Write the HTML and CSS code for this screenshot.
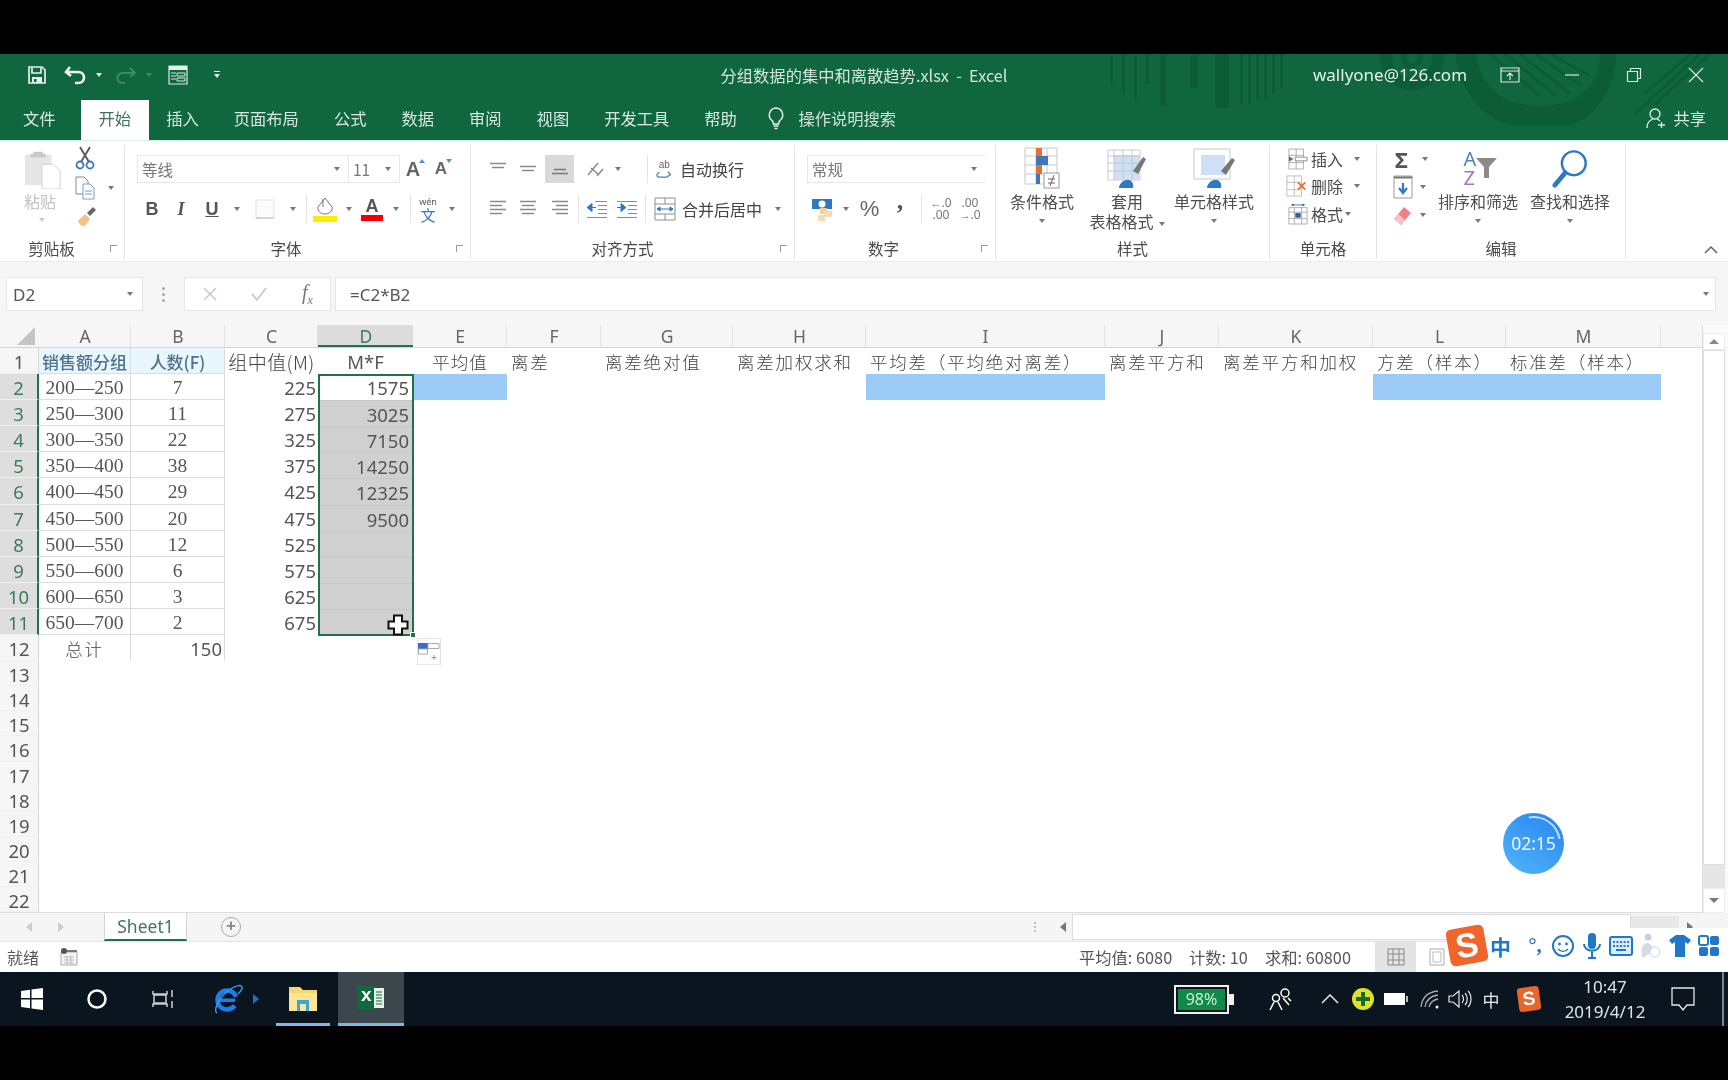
FILE: index.html
```html
<!DOCTYPE html>
<html lang="zh-CN">
<head>
<meta charset="utf-8">
<title>分组数据的集中和离散趋势.xlsx - Excel</title>
<link rel="stylesheet" href="styles.css">
</head>
<body>
<div class="page">
  <div class="black-top"></div>
  <main class="app">
    <header class="chrome">
      <svg class="decor" width="1728" height="86" viewBox="0 0 1728 86">
        <g fill="#0c5c37">
          <rect x="1110" y="0" width="3" height="30"/><rect x="1122" y="0" width="3" height="40"/><rect x="1134" y="0" width="3" height="46"/><rect x="1146" y="0" width="3" height="30"/>
          <rect x="1160" y="0" width="6" height="52"/><rect x="1190" y="0" width="8" height="34"/><rect x="1215" y="0" width="14" height="54"/><rect x="1240" y="0" width="3" height="50"/><rect x="1248" y="0" width="3" height="50"/><rect x="1256" y="0" width="3" height="46"/><rect x="1264" y="0" width="3" height="46"/><rect x="1272" y="0" width="3" height="40"/><rect x="1280" y="0" width="3" height="34"/>
        </g>
        <circle cx="1412" cy="4" r="26" fill="none" stroke="#0c5c37" stroke-width="12"/>
        <circle cx="1412" cy="4" r="8" fill="none" stroke="#0c5c37" stroke-width="5"/>
        <path d="M1456 0 C1458 40 1490 70 1515 72 L1570 72 C1600 60 1616 30 1616 0 L1600 0 C1600 30 1580 52 1540 52 C1500 52 1480 30 1476 0 Z" fill="#0c5c37"/>
        <g stroke="#0c5c37" stroke-width="3"><path d="M1490 0 L1540 42M1505 0 L1556 42M1520 0 L1570 40M1535 0 L1582 32M1550 0 L1590 22"/><path d="M1645 40 L1690 0M1655 50 L1710 0M1635 60 L1700 0"/></g>
      </svg>
      <div class="titlebar">
        <div class="qat">
          <svg class="ico" width="20" height="20" viewBox="0 0 20 20"><path d="M2 2h13l3 3v13H2zM5 3v5h9V3" fill="none" stroke="#e6f0ea" stroke-width="1.7"/><path d="M5 12h10v6H5z" fill="#e6f0ea"/><rect x="7" y="14" width="2.5" height="3" fill="#10673f"/></svg>
          <svg class="ico end" width="26" height="22" viewBox="0 0 26 22"><path d="M6 3 2 8l5 4M3 8h11c8 0 8 11 0 11h-3" fill="none" stroke="#f0f5f2" stroke-width="2.6"/></svg>
          <i class="caret light"></i>
          <svg class="ico" width="24" height="20" viewBox="0 0 24 20"><path d="M17 3l5 5-5 4M21 8H10c-8 0-7 10 0 10h2" fill="none" stroke="#3f8a64" stroke-width="2"/></svg>
          <i class="caret dim"></i>
          <svg class="ico" width="20" height="20" viewBox="0 0 20 20"><path d="M1 1h18v18H1z" fill="none" stroke="#dbe8e0" stroke-width="1.2"/><path d="M1 1h18v4H1z" fill="#e6f0ea"/><path d="M3 8h5M3 11h5M3 14h5M9 8h8v3H9zM9 13h8v3H9z" fill="none" stroke="#dbe8e0"/></svg>
          <span class="qat-more"><i class="qat-line"></i><i class="caret light"></i></span>
        </div>
        <h1 class="doc-title">分组数据的集中和离散趋势.xlsx&nbsp; - &nbsp;Excel</h1>
        <div class="win-controls">
          <span class="user">wallyone@126.com</span>
          <svg class="wc" width="20" height="16" viewBox="0 0 20 16"><path d="M1 1h18v14H1zM1 4h18M10 13V7M7 9l3-3 3 3" fill="none" stroke="#d8e8df" stroke-width="1.2"/></svg>
          <svg class="wc" width="16" height="16" viewBox="0 0 16 16"><path d="M1 8h14" stroke="#d8e8df" stroke-width="1.2"/></svg>
          <svg class="wc" width="16" height="16" viewBox="0 0 16 16"><path d="M1.5 4.500h10v10h-10zM4.500 4.500v-3h10v10h-3" fill="none" stroke="#d8e8df" stroke-width="1.2"/></svg>
          <svg class="wc" width="16" height="16" viewBox="0 0 16 16"><path d="M1 1l14 14M15 1L1 15" stroke="#d8e8df" stroke-width="1.2"/></svg>
        </div>
      </div>
      <nav class="tabs">
        <span class="tab">文件</span>
        <span class="tab active">开始</span>
        <span class="tab">插入</span>
        <span class="tab">页面布局</span>
        <span class="tab">公式</span>
        <span class="tab">数据</span>
        <span class="tab">审阅</span>
        <span class="tab">视图</span>
        <span class="tab">开发工具</span>
        <span class="tab">帮助</span>
        <svg class="bulb" width="18" height="24" viewBox="0 0 18 24"><path d="M9 2a7 7 0 0 0-4 12.500c1 1 1.500 2 1.500 3.500h5c0-1.500.5-2.500 1.500-3.500A7 7 0 0 0 9 2z" fill="none" stroke="#e3efe8" stroke-width="1.500"/><path d="M6.500 20h5M7.500 22.500h3" stroke="#e3efe8" stroke-width="1.600"/></svg>
        <span class="search">操作说明搜索</span>
        <span class="share">
          <svg width="20" height="22" viewBox="0 0 20 22"><circle cx="9" cy="7" r="5" fill="none" stroke="#dcebe2" stroke-width="1.300"/><path d="M1 21c0-5 3-8 6-9M11 12c1 .3 2 1 3 2M12 18h7M15.500 15v6" fill="none" stroke="#dcebe2" stroke-width="1.300"/></svg>
          共享
        </span>
      </nav>
    </header>

    <section class="ribbon">
      <div class="group g-clip">
        <div class="clip-body">
          <div class="paste">
            <svg width="38" height="40" viewBox="0 0 38 42"><path d="M0 6h28v32H0z" fill="#e6e6e6"/><path d="M9 3h10v2h3v4H6V5h3z" fill="#c9c9c9"/><path d="M18 16h12l7 7v19H18z" fill="#fff" stroke="#cfcfcf"/></svg>
            <span class="paste-label">粘贴</span>
            <i class="caret pale"></i>
          </div>
          <div class="clip-tools">
            <svg width="20" height="24" viewBox="0 0 20 24"><path d="M5 1l9 15M15 1L6 16" stroke="#555" stroke-width="1.800" fill="none"/><circle cx="5" cy="19" r="3.500" fill="none" stroke="#3f78b5" stroke-width="1.800"/><circle cx="15" cy="19" r="3.500" fill="none" stroke="#3f78b5" stroke-width="1.800"/></svg>
            <span class="copy">
              <svg width="22" height="24" viewBox="0 0 22 24"><path d="M1 1h8l4 4v13H1z" fill="#fff" stroke="#888"/><path d="M8 8h7l4 4v11H8z" fill="#fff" stroke="#7a9ec4"/><path d="M10 15h7M10 18h7" stroke="#7a9ec4"/></svg>
              <i class="caret"></i>
            </span>
            <svg width="22" height="22" viewBox="0 0 22 22"><path d="M3 15l7-7 5 5-5 7c-3 1-6-2-7-5z" fill="#f4c27f"/><path d="M12 7l6-6 3 3-6 6z" fill="#666"/></svg>
          </div>
        </div>
        <div class="glabel short"><span></span><b>剪贴板</b><i class="launcher"></i></div>
      </div>

      <div class="group g-font">
        <div class="rows">
          <div class="font-row1">
            <div class="combo font-name"><span>等线</span><i class="caret"></i></div>
            <div class="combo font-size"><span>11</span><i class="caret"></i></div>
            <span class="grow-a">A<sup class="up"></sup></span>
            <span class="shrink-a">A<sup class="down"></sup></span>
          </div>
          <div class="font-row2">
            <b class="fmt">B</b><em class="fmt it">I</em><u class="fmt">U</u><i class="caret"></i>
            <svg width="20" height="20" viewBox="0 0 20 20"><path d="M1 1h18v18H1z" fill="#fbfbfb" stroke="#e4e4e4"/><path d="M1 19h18" stroke="#bbb"/></svg>
            <i class="caret"></i><i class="vsep"></i>
            <svg width="24" height="26" viewBox="0 0 24 26"><path d="M12 2l7 9c1 4-3 7-7 7s-8-3-7-7z" fill="#fff" stroke="#777"/><path d="M10 3v8" stroke="#777"/><path d="M0 20h24v6H0z" fill="#ffec00"/></svg>
            <i class="caret"></i>
            <span class="font-color"><span>A</span><i></i></span>
            <i class="caret"></i><i class="vsep"></i>
            <span class="phon"><small>wén</small><span>文</span></span>
            <i class="caret"></i>
          </div>
        </div>
        <div class="glabel"><span></span><b>字体</b><i class="launcher"></i></div>
      </div>

      <div class="group g-align">
        <div class="rows">
          <div class="align-row1">
            <svg class="al" width="18" height="14" viewBox="0 0 18 14"><path d="M1 1.500h16M3 5.500h12" stroke="#8a8a8a" stroke-width="1.300"/></svg>
            <svg class="al" width="18" height="14" viewBox="0 0 18 14"><path d="M1 4.500h16M3 8.500h12" stroke="#8a8a8a" stroke-width="1.300"/></svg>
            <span class="al-on"><svg width="18" height="14" viewBox="0 0 18 14"><path d="M3 7.500h12M1 11.500h16" stroke="#7a7a7a" stroke-width="1.300"/></svg></span>
            <i></i>
            <svg width="22" height="18" viewBox="0 0 22 18"><path d="M2 15L12 3M5 8l7 6M17 9L11 16" stroke="#888" stroke-width="1.400" fill="none"/></svg>
            <i class="caret"></i>
            <i></i>
            <i class="vsep"></i>
            <svg class="wrap-ico" width="20" height="22" viewBox="0 0 22 22"><path d="M4 15c-4 0-4 5 0 5M4 15" fill="none" stroke="#4a7fb5" stroke-width="1.300"/><path d="M4 20h8l4-3M13 14l3 3-3 2" fill="none" stroke="#4a7fb5" stroke-width="1.300"/><text x="3" y="10" font-size="11" fill="#666" font-family="Liberation Sans">ab</text></svg>
            <span class="txt">自动换行</span>
          </div>
          <div class="align-row2">
            <svg width="18" height="20" viewBox="0 0 18 20"><path d="M1 2.500h16M1 6.500h12M1 10.500h16M1 14.500h12" stroke="#8a8a8a" stroke-width="1.300"/></svg>
            <svg width="18" height="20" viewBox="0 0 18 20"><path d="M1 2.500h16M3 6.500h12M1 10.500h16M3 14.500h12" stroke="#8a8a8a" stroke-width="1.300"/></svg>
            <svg width="18" height="20" viewBox="0 0 18 20"><path d="M1 2.500h16M5 6.500h12M1 10.500h16M5 14.500h12" stroke="#8a8a8a" stroke-width="1.300"/></svg>
            <i class="vsep"></i>
            <svg width="22" height="20" viewBox="0 0 22 20"><path d="M9 2.500h12M12 6.500h9M12 10.500h9M12 14.500h9M1 18.500h20" stroke="#8a8a8a" stroke-width="1.200"/><path d="M1 8.500l5-4v8zM5 8.500h5" fill="#2f78c4" stroke="#2f78c4"/></svg>
            <svg width="22" height="20" viewBox="0 0 22 20"><path d="M1 2.500h20M12 6.500h9M12 10.500h9M12 14.500h9M1 18.500h20" stroke="#8a8a8a" stroke-width="1.200"/><path d="M10 8.500l-5-4v8zM6 8.500H1" fill="#2f78c4" stroke="#2f78c4"/></svg>
            <i class="vsep"></i>
            <svg width="22" height="24" viewBox="0 0 22 24"><path d="M1 1h20v22H1zM1 7h20M1 17h20M11 1v6M11 17v6" fill="#fff" stroke="#8f8f8f"/><path d="M3 12h16M3 12l3-2v4zM19 12l-3-2v4z" stroke="#2f78c4" fill="#2f78c4"/></svg>
            <span class="txt">合并后居中</span>
            <i class="caret"></i>
          </div>
        </div>
        <div class="glabel"><span></span><b>对齐方式</b><i class="launcher"></i></div>
      </div>

      <div class="group g-num">
        <div class="rows">
          <div class="combo num-format"><span>常规</span><i class="caret"></i></div>
          <div class="num-row2">
            <svg width="22" height="24" viewBox="0 0 22 24"><path d="M0 2h20v10H0z" fill="#2f78c4"/><circle cx="10" cy="7" r="3.500" fill="#fff"/><path d="M8 11h7v6H8z" fill="#f4cf9c"/><path d="M12 14h8v6h-8zM6 18h7v6H6z" fill="#f6dcb6"/></svg>
            <i class="caret"></i>
            <span class="pct">%</span>
            <b class="comma">,</b>
            <i class="vsep"></i>
            <span class="dec"><span><em>←</em>.0</span><span>.00</span></span>
            <span class="dec"><span>.00</span><span><em>→</em>.0</span></span>
          </div>
        </div>
        <div class="glabel"><span></span><b>数字</b><i class="launcher"></i></div>
      </div>

      <div class="group g-styles">
        <div class="bigs">
          <div class="big b-cond">
            <svg width="36" height="42" viewBox="0 0 36 42"><path d="M1 1h32v36H1zM1 9h32M1 18h32M1 27h32M12 1v36M23 1v36" fill="#fff" stroke="#c9c9c9"/><path d="M12 1h6v8h-6zM12 18h6v9h-6z" fill="#e2703a"/><path d="M12 9h12v9H12zM12 27h4v10h-4z" fill="#3f78b5"/><path d="M20 26h15v15H20z" fill="#fff" stroke="#999"/><path d="M24 32h7M24 36h7M30 28l-4 11" stroke="#666"/></svg>
            <span>条件格式</span><i class="caret"></i>
          </div>
          <div class="big b-table">
            <svg width="40" height="42" viewBox="0 0 40 42"><path d="M1 3h32v30H1z" fill="#fff" stroke="#c9c9c9"/><path d="M7 8h26v25H7z" fill="#d0dff2"/><path d="M1 9h32M1 16h32M1 24h32M7 3v30M16 3v30M25 3v30" stroke="#bcc9da" fill="none"/><path d="M26 24l10-14 3 2-8 15z" fill="#777"/><path d="M12 41c0-4 5-9 10-8 3 .5 5 4 4 8z" fill="#2f78c4"/></svg>
            <span>套用</span><span class="line2">表格格式<i class="caret inline"></i></span>
          </div>
          <div class="big b-cell">
            <svg width="42" height="42" viewBox="0 0 42 42"><path d="M1 2h36v30H1z" fill="#fff" stroke="#c9c9c9"/><path d="M8 8h24v20H8z" fill="#cfe0f6"/><path d="M28 24l11-13 3 2-9 15z" fill="#777"/><path d="M14 41c0-4 5-9 10-8 3 .5 5 4 4 8z" fill="#2f78c4"/></svg>
            <span>单元格样式</span><i class="caret"></i>
          </div>
        </div>
        <div class="glabel center"><b>样式</b></div>
      </div>

      <div class="group g-cells">
        <div class="cell-rows">
          <div class="cell-row">
            <svg width="20" height="22" viewBox="0 0 22 24"><path d="M1 1h16v22H1zM1 8h16M1 16h16M9 1v22" fill="#fff" stroke="#aaa"/><path d="M1 9l5 3-5 3z" fill="#2f78c4"/><path d="M8 10h13v4H8z" fill="#fff" stroke="#888"/></svg>
            <span>插入</span><i class="caret"></i>
          </div>
          <div class="cell-row">
            <svg width="22" height="22" viewBox="0 0 24 24"><path d="M1 1h16v22H1zM1 8h16M1 16h16M9 1v22" fill="#fff" stroke="#bbb"/><path d="M13 8l8 8M21 8l-8 8" stroke="#e2703a" stroke-width="2"/></svg>
            <span>删除</span><i class="caret"></i>
          </div>
          <div class="cell-row">
            <svg width="20" height="22" viewBox="0 0 22 24"><path d="M1 5h20v18H1zM1 10h20M1 17h20M7 5v18M15 5v18" fill="#fff" stroke="#aaa"/><path d="M8 11h6v5H8z" fill="#2f5f9c"/><path d="M4 2h14M4 2l2-1v2zM18 2l-2-1v2z" stroke="#2f78c4"/></svg>
            <span>格式</span><i class="caret near"></i>
          </div>
        </div>
        <div class="glabel center"><b>单元格</b></div>
      </div>

      <div class="group g-edit">
        <div class="edit-body">
          <div class="edit-small">
            <div class="es es-sum"><span class="sigma">Σ</span><i class="caret"></i></div>
            <div class="es">
              <svg width="20" height="24" viewBox="0 0 20 24"><path d="M1 1h18v22H1z" fill="#fff" stroke="#9a9a9a"/><path d="M1 2.500h18" stroke="#777" stroke-width="2"/><path d="M10 8v9M6 13l4 5 4-5" fill="none" stroke="#2f78c4" stroke-width="2.200"/></svg>
              <i class="caret"></i>
            </div>
            <div class="es">
              <svg width="20" height="22" viewBox="0 0 20 22"><path d="M1 15L11 3l7 6-10 12z" fill="#f0808a"/><path d="M1 15l4-5 7 6-4 5z" fill="#f8c2c6"/></svg>
              <i class="caret"></i>
            </div>
          </div>
          <div class="big b-sort">
            <div class="sort-ico"><span class="az"><span class="a">A</span><span class="z">Z</span></span><svg width="22" height="22" viewBox="0 0 22 22"><path d="M0 1h21l-8 9v11H8V10z" fill="#8a8a8a"/></svg></div>
            <span>排序和筛选</span><i class="caret"></i>
          </div>
          <div class="big b-find">
            <svg width="40" height="40" viewBox="0 0 40 42"><circle cx="24" cy="15" r="12.500" fill="#fff" stroke="#2f78c4" stroke-width="2.600"/><path d="M15 25L4 38" stroke="#2f78c4" stroke-width="5" stroke-linecap="round"/></svg>
            <span>查找和选择</span><i class="caret"></i>
          </div>
        </div>
        <div class="glabel center"><b>编辑</b></div>
      </div>

      <div class="ribbon-end">
        <svg width="14" height="9" viewBox="0 0 14 9"><path d="M1 8l6-6 6 6" fill="none" stroke="#666" stroke-width="1.500"/></svg>
      </div>
    </section>

    <section class="formula">
      <div class="namebox"><span>D2</span><i class="caret"></i></div>
      <div class="grip"><i></i><i></i><i></i></div>
      <div class="fx-btns">
        <svg width="16" height="16" viewBox="0 0 16 16"><path d="M2 2l12 12M14 2L2 14" stroke="#c4c4c4" stroke-width="1.400"/></svg>
        <svg width="18" height="16" viewBox="0 0 18 16"><path d="M2 8l5 6 9-12" fill="none" stroke="#c4c4c4" stroke-width="1.600"/></svg>
        <span class="fx">f<sub>x</sub></span>
      </div>
      <div class="fx-input"><span>=C2*B2</span><i class="caret big-caret"></i></div>
    </section>

    <section class="sheet-wrap">
      <div class="sheet">
        <div class="row head">
          <div class="corner"><svg width="18" height="18" viewBox="0 0 18 18"><path d="M18 0v18H0z" fill="#c4c4c4"/></svg></div>
          <div class="ch">A</div><div class="ch">B</div><div class="ch">C</div><div class="ch on">D</div><div class="ch">E</div><div class="ch">F</div><div class="ch">G</div><div class="ch">H</div><div class="ch">I</div><div class="ch">J</div><div class="ch">K</div><div class="ch">L</div><div class="ch">M</div><div class="ch end-ch"></div>
        </div>
        <div class="row">
          <div class="rh">1</div>
          <div class="c b hd1 song">销售额分组</div><div class="c b hd1 song">人数(F)</div><div class="c cjk ctr tight">组中值(M)</div><div class="c ctr num">M*F</div><div class="c cjk ctr wide">平均值</div><div class="c cjk pad">离差</div><div class="c cjk pad">离差绝对值</div><div class="c cjk pad">离差加权求和</div><div class="c cjk pad">平均差（平均绝对离差）</div><div class="c cjk pad">离差平方和</div><div class="c cjk pad">离差平方和加权</div><div class="c cjk pad">方差（样本）</div><div class="c cjk pad">标准差（样本）</div>
        </div>
        <div class="row">
          <div class="rh on">2</div>
          <div class="c b song ctr">200—250</div><div class="c b song ctr">7</div><div class="c num">225</div><div class="c num">1575</div><div class="c blue"></div><div class="c"></div><div class="c"></div><div class="c"></div><div class="c blue"></div><div class="c"></div><div class="c"></div><div class="c blue"></div><div class="c blue"></div>
        </div>
        <div class="row"><div class="rh on">3</div><div class="c b song ctr">250—300</div><div class="c b song ctr">11</div><div class="c num">275</div><div class="c num sel">3025</div></div>
        <div class="row"><div class="rh on">4</div><div class="c b song ctr">300—350</div><div class="c b song ctr">22</div><div class="c num">325</div><div class="c num sel">7150</div></div>
        <div class="row"><div class="rh on">5</div><div class="c b song ctr">350—400</div><div class="c b song ctr">38</div><div class="c num">375</div><div class="c num sel">14250</div></div>
        <div class="row"><div class="rh on">6</div><div class="c b song ctr">400—450</div><div class="c b song ctr">29</div><div class="c num">425</div><div class="c num sel">12325</div></div>
        <div class="row"><div class="rh on">7</div><div class="c b song ctr">450—500</div><div class="c b song ctr">20</div><div class="c num">475</div><div class="c num sel">9500</div></div>
        <div class="row"><div class="rh on">8</div><div class="c b song ctr">500—550</div><div class="c b song ctr">12</div><div class="c num">525</div><div class="c num sel"></div></div>
        <div class="row"><div class="rh on">9</div><div class="c b song ctr">550—600</div><div class="c b song ctr">6</div><div class="c num">575</div><div class="c num sel"></div></div>
        <div class="row"><div class="rh on">10</div><div class="c b song ctr">600—650</div><div class="c b song ctr">3</div><div class="c num">625</div><div class="c num sel"></div></div>
        <div class="row"><div class="rh on">11</div><div class="c b song ctr">650—700</div><div class="c b song ctr">2</div><div class="c num">675</div><div class="c num sel"></div></div>
        <div class="row"><div class="rh">12</div><div class="c bl cjk ctr">总计</div><div class="c bl num">150</div></div>
        <div class="row low"><div class="rh">13</div></div>
        <div class="row low"><div class="rh">14</div></div>
        <div class="row low"><div class="rh">15</div></div>
        <div class="row low"><div class="rh">16</div></div>
        <div class="row low"><div class="rh">17</div></div>
        <div class="row low"><div class="rh">18</div></div>
        <div class="row low"><div class="rh">19</div></div>
        <div class="row low"><div class="rh">20</div></div>
        <div class="row low"><div class="rh">21</div></div>
        <div class="row low"><div class="rh">22</div></div>
        <div class="selection"><i class="handle"></i></div>
        <svg class="cross" width="22" height="22" viewBox="0 0 22 22"><path d="M7 1.500h8v6h5.500v7H15v6H7v-6H1.500v-7H7z" fill="#fff" stroke="#111" stroke-width="2"/></svg>
        <div class="paste-opt"><svg width="22" height="18" viewBox="0 0 22 18"><path d="M0 0h10v6H0z" fill="#3a6fc4"/><path d="M10 .5h11v5H10zM.5 6h9v5h-9z" fill="#fff" stroke="#aaa"/><path d="M16 12v5M13.500 14.500h5" stroke="#999"/></svg></div>
      </div>
      <aside class="vscroll">
        <div class="vbtn"><i class="tri up-tri"></i></div>
        <div class="vthumb"></div>
        <div class="vtrack"></div>
        <div class="vbtn low-btn"><i class="tri down-tri"></i></div>
      </aside>
    </section>

    <section class="tabbar">
      <div class="nav-arrows"><i class="tri left-tri pale-tri"></i><i class="tri right-tri pale-tri"></i></div>
      <div class="sheet-tab">Sheet1</div>
      <div class="add-sheet">+</div>
      <div class="tab-grip"><i></i><i></i><i></i></div>
      <i class="tri left-tri"></i>
      <div class="hthumb"></div>
      <div class="htrack"></div>
      <i class="tri right-tri"></i>
    </section>

    <footer class="status">
      <span class="ready">就绪</span>
      <svg width="18" height="18" viewBox="0 0 18 18"><path d="M1 4h16v13H1z" fill="#f4f4f4" stroke="#aaa"/><circle cx="4" cy="3" r="3" fill="#555"/><path d="M6 3h11" stroke="#555" stroke-width="1.500"/><path d="M4 9h10M4 12h10M4 15h10M7 8v8M11 8v8" stroke="#bbb"/></svg>
      <div class="stats"><span>平均值: 6080</span><span>计数: 10</span><span>求和: 60800</span></div>
      <div class="view on-view"><svg width="18" height="18" viewBox="0 0 18 18"><path d="M1 1h16v16H1zM1 6h16M1 12h16M6 1v16M12 1v16" fill="none" stroke="#8a8a8a"/></svg></div>
      <div class="view"><svg width="16" height="18" viewBox="0 0 16 18"><path d="M1 1h14v16H1z" fill="none" stroke="#aaa"/><path d="M4 4h8v10H4z" fill="none" stroke="#bbb"/></svg></div>
    </footer>
  </main>

  <div class="taskbar">
    <div class="task-left">
      <div class="t win"><svg width="22" height="22" viewBox="0 0 22 22"><path d="M0 3l9-1.300V10H0zM10.500 1.500L22 0v10H10.500zM0 11.500h9v8.800L0 19zM10.500 11.500H22V22l-11.500-1.600z" fill="#fff"/></svg></div>
      <div class="t cortana"><svg width="22" height="22" viewBox="0 0 22 22"><circle cx="11" cy="11" r="8.500" fill="none" stroke="#fff" stroke-width="2.500"/></svg></div>
      <div class="t tview"><svg width="24" height="24" viewBox="0 0 24 24"><path d="M3 4v3h14V4M3 20v-3h14v3M4 8h12v8H4zM22 3v7M22 14v7" fill="none" stroke="#c9ced2" stroke-width="1.500"/></svg></div>
      <div class="t ie">
        <svg class="ie-logo" width="30" height="32" viewBox="0 0 30 32"><circle cx="14" cy="17" r="9.500" fill="none" stroke="#1d7fe6" stroke-width="4.500" stroke-dasharray="50 10" stroke-dashoffset="-6"/><rect x="7" y="15.500" width="15" height="3.500" fill="#1d7fe6"/><path d="M4 30C0 28 6 14 16 7c6-4 12-6 13-3 .8 2-2 5-4 7" fill="none" stroke="#3b95ee" stroke-width="1.500"/></svg>
        <i class="tri right-tri blue-tri"></i>
      </div>
      <div class="t folder run"><svg width="30" height="28" viewBox="0 0 30 28"><path d="M1 3h11l3 3h14v21H1z" fill="#f5d76e"/><path d="M1 9h28v18H1z" fill="#fbe596"/><path d="M9 16h12v11h-3v-7h-6v7H9z" fill="#3aa7d8"/></svg></div>
      <div class="t excel run act"><svg width="28" height="26" viewBox="0 0 28 26"><path d="M0 1h19v24H0z" fill="#0f6a3e"/><path d="M17 3h10v20H17z" fill="#e6f2ea"/><path d="M19 7h6M19 10h6M19 13h6M19 16h6M19 19h6" stroke="#0f6a3e"/></svg><span class="x">x</span></div>
    </div>
    <div class="task-right">
      <div class="batt"><span>98%</span></div>
      <svg class="tr w64" width="26" height="24" viewBox="0 0 26 24"><circle cx="17" cy="6" r="4" fill="none" stroke="#fff" stroke-width="1.500"/><circle cx="8" cy="11" r="3.500" fill="none" stroke="#fff" stroke-width="1.500"/><path d="M2 23l4-8M10 15l4 8M15 11l6 7M20 11l3 3" stroke="#fff" stroke-width="1.500" fill="none"/></svg>
      <svg class="tr chev" width="18" height="10" viewBox="0 0 18 10"><path d="M1 9l8-8 8 8" fill="none" stroke="#e6e6e6" stroke-width="1.500"/></svg>
      <svg class="tr w30" width="24" height="26" viewBox="0 0 24 26"><circle cx="12" cy="13" r="11" fill="#dfe22a"/><path d="M12 6v14M5 13h14" stroke="#1a6a2a" stroke-width="4"/></svg>
      <svg class="tr w34" width="24" height="14" viewBox="0 0 24 14"><path d="M0 1h21v12H0z" fill="#fff"/><path d="M22 4h2v6h-2z" fill="#bbb"/></svg>
      <svg class="tr w34" width="20" height="20" viewBox="0 0 20 20"><path d="M1 18C2 8 8 3 18 2M5 18c1-7 5-11 13-12M9 18c1-4 4-7 9-8" fill="none" stroke="#a8aeb2" stroke-width="1.300"/><circle cx="17" cy="18" r="1.500" fill="#fff"/></svg>
      <svg class="tr w28" width="24" height="20" viewBox="0 0 24 20"><path d="M1 7h4l6-5v16l-6-5H1zM14 6c2 2 2 6 0 8M17 4c3 3 3 9 0 12M20 2c4 4 4 12 0 16" fill="none" stroke="#e6e6e6" stroke-width="1.200"/></svg>
      <span class="tr w34 ime">中</span>
      <div class="tr w42 s-wrap"><span class="s-small">S</span></div>
      <div class="clock"><span>10:47</span><span>2019/4/12</span></div>
      <svg class="tr w50" width="24" height="24" viewBox="0 0 24 24"><path d="M1 1h22v17h-7l-4 5-4-5H1z" fill="none" stroke="#e6e6e6" stroke-width="1.300"/></svg>
      <i class="edge"></i>
    </div>
  </div>
  <div class="black-bottom"></div>

  <div class="timer"><i class="shine"></i>02:15</div>
  <div class="sogou">
    <span class="s-logo"><span>S</span></span>
    <span class="sg zh">中</span>
    <span class="sg punct">°,</span>
    <svg class="sg" width="24" height="24" viewBox="0 0 24 24"><circle cx="12" cy="12" r="10" fill="none" stroke="#1f78c8" stroke-width="2"/><circle cx="8.500" cy="10" r="1.400" fill="#1f78c8"/><circle cx="15.500" cy="10" r="1.400" fill="#1f78c8"/><path d="M7 15c3 3 7 3 10 0" fill="none" stroke="#1f78c8" stroke-width="1.600"/></svg>
    <svg class="sg" width="20" height="28" viewBox="0 0 20 28"><rect x="6" y="1" width="8" height="16" rx="4" fill="#1f78c8"/><path d="M2 12c0 9 16 9 16 0M10 20v6M6 26h8" fill="none" stroke="#1f78c8" stroke-width="2"/></svg>
    <svg class="sg" width="24" height="22" viewBox="0 0 24 22"><rect x="1" y="2" width="22" height="18" rx="2" fill="#dcecfa" stroke="#1f78c8" stroke-width="2"/><path d="M4 7h16M4 11h16" stroke="#1f78c8" stroke-dasharray="2 1.500" stroke-width="2"/><path d="M7 15h10" stroke="#1f78c8" stroke-width="2"/></svg>
    <svg class="sg" width="22" height="26" viewBox="0 0 22 26"><circle cx="8" cy="4" r="3.500" fill="#c6d3de"/><path d="M3 25c-3-5-2-14 4-15 4 0 6 4 6 8-3 2-6 4-10 7z" fill="#d4dde6"/><circle cx="15" cy="19" r="5" fill="#fff" stroke="#c6d3de"/></svg>
    <svg class="sg" width="22" height="24" viewBox="0 0 22 24"><path d="M7 1h8l7 5-3 4-3-2v15H6V8l-3 2-3-4z" fill="#1f78c8"/></svg>
    <svg class="sg" width="22" height="22" viewBox="0 0 22 22"><rect x="1" y="1" width="9" height="9" rx="2" fill="none" stroke="#1f78c8" stroke-width="2"/><rect x="12" y="1" width="9" height="9" rx="2" fill="#1f78c8"/><rect x="1" y="12" width="9" height="9" rx="2" fill="#1f78c8"/><rect x="12" y="12" width="9" height="9" rx="2" fill="#1f78c8"/></svg>
  </div>
</div>
</body>
</html>
```
FILE: styles.css
```css
* { box-sizing: border-box; }
html, body { margin: 0; padding: 0; background: #000; }
body { width: 1728px; height: 1080px; overflow: hidden; font-family: "Noto Sans CJK SC", "Noto Sans", sans-serif; color: #4a4a4a; }
i, em { font-style: normal; }
svg { display: block; flex: none; }
.page { position: relative; width: 1728px; height: 1080px; background: #000; filter: blur(.55px); }
.black-top { height: 54px; }
.black-bottom { height: 54px; }
.app { height: 918px; display: flex; flex-direction: column; background: #fff; }

/* carets and small glyphs */
.caret { display: block; width: 0; height: 0; border-left: 3px solid transparent; border-right: 3px solid transparent; border-top: 4px solid #777; justify-self: center; flex: none; }
.caret.light { border-top-color: #e6f0ea; }
.caret.dim { border-top-color: #3f8a64; }
.caret.pale { border-top-color: #c9c9c9; }
.caret.inline { display: inline-block; margin-left: 5px; vertical-align: middle; }
.tri { display: block; width: 0; height: 0; flex: none; }
.left-tri { border-top: 5px solid transparent; border-bottom: 5px solid transparent; border-right: 6px solid #777; }
.right-tri { border-top: 5px solid transparent; border-bottom: 5px solid transparent; border-left: 6px solid #777; }
.up-tri { border-left: 5px solid transparent; border-right: 5px solid transparent; border-bottom: 5px solid #888; }
.down-tri { border-left: 5px solid transparent; border-right: 5px solid transparent; border-top: 5px solid #777; }
.pale-tri { border-left-color: #ccc; border-right-color: #ccc; }
.blue-tri { border-left-color: #1d6fc4; }
.vsep { display: block; width: 1px; height: 28px; background: #e4e4e4; justify-self: center; }

/* title bar and tabs */
.chrome { position: relative; height: 86px; background: #10673f; color: #d8e8df; overflow: hidden; flex: none; }
.decor { position: absolute; left: 0; top: 0; }
.titlebar { position: relative; height: 41px; display: grid; grid-template-columns: 1fr auto 1fr; align-items: center; }
.qat { display: grid; grid-template-columns: 24px 41px 18px 34px 14px 43px 36px; margin-left: 25px; align-items: center; justify-items: center; }
.qat .end { justify-self: end; }
.qat-more { display: flex; flex-direction: column; align-items: center; gap: 2px; }
.qat-line { display: block; width: 6px; height: 1.500px; background: #e6f0ea; }
.doc-title { margin: 0; font-size: 16.300px; font-weight: 400; color: #d3e4da; white-space: nowrap; }
.win-controls { display: grid; grid-template-columns: 152px 88px 36px 88px 36px; justify-items: center; align-items: center; justify-self: end; padding-right: 14px; }
.user { font: 17px/1 "Noto Sans", sans-serif; color: #e4f0e9; white-space: nowrap; }
.tabs { position: relative; height: 45px; display: flex; align-items: stretch; padding-left: 5.500px; font-size: 16.300px; }
.tab { display: flex; align-items: center; padding: 0 17.500px; white-space: nowrap; }
.tab.active { background: #fff; color: #3d7258; margin-left: 8px; margin-top: 5px; padding-bottom: 4px; }
.bulb { align-self: center; margin-left: 13px; }
.search { align-self: center; margin-left: 13px; color: #cfe2d7; }
.share { margin-left: auto; display: flex; align-items: center; gap: 7px; padding-right: 22px; }

/* ribbon */
.ribbon { display: flex; height: 122px; flex: none; background: #fff; border-bottom: 1px solid #ececec; font-size: 16px; border-top: 1px solid #d9eee2; }
.group { position: relative; display: flex; flex-direction: column; border-right: 1px solid #e4e4e4; margin: 4px 0 4px; height: 114px; flex: none; }
.rows { display: flex; flex-direction: column; gap: 12px; padding-top: 10px; flex: 1; }
.glabel { display: grid; grid-template-columns: 1fr auto 1fr; align-items: center; height: 22px; flex: none; padding-right: 7px; padding-bottom: 1px; font-size: 15.500px; color: #4a4a4a; }
.glabel b { font-weight: 400; margin-right: 28px; }
.glabel.short b { margin-right: 14px; }
.glabel.center { display: flex; justify-content: center; padding-right: 0; }
.glabel.center b { margin-right: 0; }
.launcher { justify-self: end; width: 7px; height: 7px; border-left: 1px solid #999; border-top: 1px solid #999; position: relative; }
.combo { display: flex; align-items: center; justify-content: space-between; height: 28px; border: 1px solid #e6e6e6; padding: 0 8px 0 4px; background: #fff; color: #777; font-size: 15.500px; }

.g-clip { width: 125px; }
.clip-body { display: flex; flex: 1; min-height: 0; padding: 0 0 0 24px; }
.paste { display: flex; flex-direction: column; width: 51px; align-items: flex-start; padding-top: 4px; }
.paste .caret { margin: 7px 0 0 15px; }
.paste-label { color: #c2c2c2; font-size: 16px; line-height: 20px; margin-top: 2px; }
.clip-tools { display: flex; flex-direction: column; gap: 6px; padding-top: 1px; }
.copy { display: flex; align-items: center; gap: 11px; }

.g-font { width: 346px; padding-left: 12px; }
.font-row1 { display: grid; grid-template-columns: 211px 52px 26px 30px; align-items: center; justify-items: center; }
.font-name, .font-size { width: 100%; }
.font-name { border-right: 0; }
.grow-a, .shrink-a { position: relative; font: 700 20px/28px "Liberation Sans", sans-serif; color: #666; }
.shrink-a { font-size: 17px; }
.up, .down { position: absolute; right: -5px; top: 4px; width: 0; height: 0; border-left: 3px solid transparent; border-right: 3px solid transparent; }
.up { border-bottom: 4px solid #5a8fc8; }
.down { border-top: 4px solid #5a8fc8; }
.font-row2 { display: grid; grid-template-columns: 30px 28px 34px 16px 40px 16px 10px 28px 20px 26px 22px 6px 30px 18px; align-items: center; justify-items: center; height: 28px; }
.fmt { font: 700 18px/1 "Liberation Sans", sans-serif; color: #555; }
.fmt.it { font-family: "Liberation Serif", serif; font-style: italic; }
.font-color { display: flex; flex-direction: column; align-items: center; font: 700 18px/18px "Liberation Sans", sans-serif; color: #555; }
.font-color i { display: block; width: 22px; height: 6px; background: #f00000; }
.phon { display: flex; flex-direction: column; align-items: center; line-height: 1; color: #3a78c0; }
.phon small { font: 9px/10px "Noto Sans", sans-serif; color: #555; }
.phon span { font-size: 15px; line-height: 15px; }

.g-align { width: 324px; padding-left: 15px; }
.align-row1, .align-row2 { height: 28px; display: grid; align-items: center; justify-items: center; }
.align-row1 { grid-template-columns: 24px 35px 29px 8px 30px 12px 22px 2px 32px auto; }
.align-row2 { grid-template-columns: 24px 35px 29px 8px 30px 30px 6px 34px auto 32px; }
.wrap-ico { justify-self: end; margin-right: 4px; }
.al-on { display: flex; align-items: center; justify-content: center; width: 29px; height: 28px; background: #d9d9d9; }
.txt { justify-self: start; white-space: nowrap; color: #444; }

.g-num { width: 201px; padding-left: 12px; }
.num-format { width: 178px; border-right: 0; }
.num-row2 { display: grid; grid-template-columns: 31px 16px 31px 30px 12px 28px 30px; height: 28px; align-items: center; justify-items: center; }
.pct { font: 22px/1 "Liberation Sans", sans-serif; color: #666; }
.comma { font: 700 26px/18px "Liberation Serif", serif; color: #555; position: relative; top: -8px; }
.dec { display: flex; flex-direction: column; font: 12px/12px "Noto Sans", sans-serif; color: #777; align-items: center; }
.dec em { color: #2f78c4; font-size: 11px; font-weight: 700; }

.g-styles { width: 274px; }
.bigs { display: flex; flex: 1; min-height: 0; padding-top: 2px; }
.big { display: flex; flex-direction: column; align-items: center; font-size: 16px; line-height: 20px; color: #4f4f4f; flex: none; white-space: nowrap; }
.big > svg { margin-bottom: 2px; }
.big > .caret { margin-top: 8px; }
.line2 { white-space: nowrap; }
.b-cond { width: 92px; }
.b-table { width: 78px; }
.b-cell { width: 96px; }

.g-cells { width: 107px; }
.cell-rows { flex: 1; display: flex; flex-direction: column; }
.cell-row { display: grid; grid-template-columns: 39px 36px 24px; height: 27.500px; align-items: center; justify-items: center; font-size: 16px; }
.cell-row svg { justify-self: end; margin-right: 1px; }
.cell-row .near { justify-self: start; }
.cell-row span { white-space: nowrap; }

.g-edit { width: 249px; }
.edit-body { display: flex; flex: 1; min-height: 0; }
.edit-small { width: 61px; padding-left: 16px; display: flex; flex-direction: column; }
.es { display: flex; align-items: center; gap: 7px; height: 28px; }
.es-sum { gap: 14px; padding-left: 2px; }
.sigma { font: 700 22px/1 "Noto Sans", sans-serif; color: #555; }
.b-sort { width: 80px; padding-top: 2px; }
.b-find { padding-top: 4px; margin-left: 6px; width: 92px; }
.sort-ico { display: flex; align-items: center; height: 42px; margin-bottom: 2px; padding-left: 6px; }
.az { display: flex; flex-direction: column; font: 20px/19px "Noto Sans", sans-serif; }
.az .a { color: #4c86c6; }
.az .z { color: #a873c4; }
.ribbon-end { flex: 1; display: flex; justify-content: flex-end; align-items: flex-end; padding: 0 10px 7px 0; }

/* formula bar */
.formula { height: 63px; flex: none; display: flex; padding: 15px 12px 14px 6px; background: #f6f6f6; }
.namebox { width: 137px; display: flex; align-items: center; justify-content: space-between; background: #fff; border: 1px solid #e6e6e6; padding: 0 9px 0 6px; font: 17px/1 "Noto Sans", sans-serif; color: #555; }
.grip { width: 41px; display: flex; flex-direction: column; align-items: center; justify-content: center; gap: 3px; }
.grip i, .tab-grip i { display: block; width: 3px; height: 3px; background: #aaa; border-radius: 50%; }
.fx-btns { width: 147px; display: grid; grid-template-columns: 49px 49px 49px; justify-items: center; align-items: center; background: #fff; border: 1px solid #e6e6e6; }
.fx { font: italic 20px/1 "Liberation Serif", serif; color: #777; }
.fx sub { font-size: 12px; }
.fx-input { flex: 1; margin-left: 4px; display: flex; align-items: center; justify-content: space-between; padding: 0 6px 0 14px; background: #fff; border: 1px solid #e6e6e6; font: 17px/1 "Noto Sans", sans-serif; color: #555; }

/* sheet */
.sheet-wrap { flex: 1; display: flex; background: #fafafa; min-height: 0; }
.sheet { position: relative; width: 1703px; background: #fff; border-right: 1px solid #ddd; border-bottom: 1px solid #ddd; }
.row { display: grid; grid-template-columns: 39px 92px 94px 93px 95px 94px 94px 132px 133px 239px 114px 154px 133px 155px 42px; grid-template-rows: 100%; height: 26.100px; font: 18.500px/26px "Noto Sans", sans-serif; color: #555; }
.row.low { height: 25.100px; }
.row.head { height: 23px; background: #f6f6f6; border-bottom: 1px solid #d4d4d4; font-size: 17.500px; color: #666; }
.corner { display: flex; justify-content: flex-end; align-items: flex-end; padding: 0 4px 2px 0; }
.ch { text-align: center; border-right: 1px solid #e2e2e2; line-height: 22px; padding-left: 1px; }
.ch.on { background: #dcdcdc; color: #3d7a5a; border-bottom: 2px solid #217346; border-right: 0; }
.end-ch { border: 0; }
.rh { text-align: center; font-size: 18.500px; color: #555; background: #f6f6f6; border-right: 1px solid #d8d8d8; border-bottom: 1px solid #f0f0f0; padding-top: 1px; }
.rh.on { background: #dedede; color: #3d7a5a; border-right: 2px solid #217346; }
.c { white-space: nowrap; overflow: hidden; text-align: right; padding: 1px 3px 0 0; }
.num { padding-right: 4px; }
.row > .num:nth-child(4) { padding-right: 2px; }
.row > .num:nth-child(3) { padding-right: 2px; }
.ctr { text-align: center; padding-right: 0; }
.cjk { font-family: "Noto Sans CJK SC", sans-serif; font-size: 17.500px; font-weight: 300; letter-spacing: 1.800px; color: #444; }
.tight { font-size: 19px; letter-spacing: .4px; }
.wide { letter-spacing: 1px; }
.pad { text-align: left; padding-left: 4px; padding-right: 0; overflow: visible; }
.b { border-right: 1px solid #dcdcdc; border-bottom: 1px solid #dcdcdc; }
.bl { border-right: 1px solid #dcdcdc; }
.hd1 { background: #e8f6fd; text-align: center; padding: 1px 0 0; color: #50728a; font-weight: 500; }
.song { font-family: "Liberation Serif", "Noto Sans CJK SC", serif; font-size: 19.500px; color: #555; }
.hd1.song { font-family: "Noto Sans CJK SC", sans-serif; font-size: 17px; color: #50728a; }
.blue { background: #9ccaf7; }
.sel { background: #d0d0d0; border-top: 1px solid #c8c8c8; }
.selection { position: absolute; left: 318px; top: 49.100px; width: 96px; height: 261.500px; border: 2px solid #217346; pointer-events: none; }
.handle { position: absolute; right: -4px; bottom: -4px; width: 6px; height: 6px; background: #217346; border: 1px solid #fff; }
.cross { position: absolute; left: 387px; top: 289px; }
.paste-opt { position: absolute; left: 417px; top: 313px; width: 24px; height: 27px; background: #fff; border: 1px solid #e4e4e4; display: flex; align-items: center; justify-content: center; }
.vscroll { width: 22px; display: flex; flex-direction: column; padding-top: 8px; }
.vbtn { height: 17px; background: #fff; border: 1px solid #eee; display: flex; align-items: center; justify-content: center; }
.vthumb { height: 515px; background: #fff; border: 1px solid #ddd; }
.vtrack { height: 23px; background: #e6e6e6; }
.low-btn { height: 25px; }

/* bottom strip */
.tabbar { height: 29px; flex: none; display: flex; align-items: center; background: #f5f5f5; border-bottom: 1px solid #e4e4e4; }
.nav-arrows { width: 104px; display: flex; gap: 26px; padding-left: 26px; }
.sheet-tab { width: 83px; height: 100%; background: #fff; border: 1px solid #d4d4d4; border-top: 0; border-bottom: 2px solid #217346; text-align: center; font: 17.500px/26px "Noto Sans", sans-serif; color: #3d7a5a; }
.add-sheet { width: 20px; height: 20px; margin-left: 34px; border: 1.500px solid #aaa; border-radius: 50%; text-align: center; font: 700 17px/16px "Liberation Sans", sans-serif; color: #888; }
.tab-grip { margin-left: 792px; width: 4px; display: flex; flex-direction: column; gap: 2px; align-items: center; }
.tab-grip i { width: 2px; height: 2px; }
.tabbar > .left-tri { margin-left: 23px; }
.hthumb { width: 559px; height: 26px; margin-left: 6px; background: #fff; border: 1px solid #ddd; }
.htrack { width: 48px; height: 22px; background: #e8e8e8; }
.tabbar > .right-tri { margin-left: 8px; }
.status { height: 30px; flex: none; display: flex; align-items: center; padding-left: 7px; background: #fff; font-size: 16px; color: #555; }
.ready { width: 53px; }
.stats { margin-left: 1001px; width: 296px; display: flex; font-size: 16.300px; white-space: nowrap; }
.stats span:nth-child(1) { width: 110px; }
.stats span:nth-child(2) { width: 76px; }
.view { width: 41px; height: 30px; display: flex; align-items: center; justify-content: center; }
.on-view { background: #e4e4e4; }

/* taskbar */
.taskbar { height: 54px; display: flex; justify-content: space-between; background: #0b1520; color: #e8e8e8; }
.task-left { display: flex; }
.t { display: flex; align-items: center; justify-content: center; height: 54px; flex: none; }
.win { width: 64px; }
.cortana { width: 66px; }
.tview { width: 64px; }
.ie { width: 82px; justify-content: flex-start; padding-left: 19px; }
.ie .tri { margin-left: 10px; }
.folder { width: 54px; margin-right: 8px; }
.excel { width: 66px; position: relative; }
.run { border-bottom: 3px solid #7fb6ea; }
.act { background: #3c464d; }
.x { position: absolute; left: 23px; top: 11px; font: 700 19px/24px "Liberation Sans", sans-serif; color: #fff; }
.task-right { display: flex; align-items: center; padding-right: 4px; }
.batt { position: relative; width: 55px; height: 29px; border: 2px solid #f0f0f0; padding: 2px; margin-right: 3px; background: #0b1520; }
.batt::after { content: ""; position: absolute; right: -7px; top: 7px; width: 5px; height: 11px; background: #f0f0f0; }
.batt span { display: block; height: 100%; background: #0f8a4a; text-align: center; font: 16px/21px "Noto Sans", sans-serif; color: #d0ead9; }
.tr { flex: none; }
.w64 { width: 26px; margin: 0 4px 0 36px; }
.chev { margin: 0 9px 0 23px; }
.w30 { width: 24px; margin: 0 3px; }
.w34 { margin: 0 6px; }
.w28 { margin: 0 2px; }
.ime { width: 24px; text-align: center; font-size: 17px; margin: 0 5px; }
.w42 { width: 42px; display: flex; justify-content: center; margin: 0; }
.s-small { display: block; width: 22px; height: 24px; background: #e8662a; border-radius: 3px; transform: rotate(-8deg); text-align: center; font: 900 19px/24px "Liberation Sans", sans-serif; color: #fff; }
.clock { width: 110px; display: flex; flex-direction: column; align-items: center; font: 17px/25px "Noto Sans", sans-serif; color: #dfe3e6; }
.w50 { margin: 0 26px 0 11px; }
.edge { display: block; width: 2px; height: 54px; background: #7d8388; margin-left: 1px; }

/* overlays */
.timer { position: absolute; left: 1503px; top: 813px; width: 61px; height: 61px; border-radius: 50%; overflow: hidden; background: linear-gradient(215deg, #2584ee 0%, #3f9ff6 55%, #4fb6fb 100%); color: #f0f8fe; text-align: center; font: 17.500px/61px "Noto Sans", sans-serif; }
.shine { position: absolute; inset: 3px; border-radius: 50%; border: 2px solid transparent; border-top-color: rgba(255,255,255,.7); transform: rotate(35deg); }
.sogou { position: absolute; left: 1482px; top: 928px; width: 246px; height: 35px; background: #fff; display: flex; align-items: center; padding-left: 8px; }
.s-logo { position: absolute; left: -34px; top: -1px; width: 38px; height: 37px; background: #f0662a; border-radius: 5px; transform: rotate(-10deg); text-align: center; }
.s-logo span { font: 900 34px/37px "Liberation Sans", sans-serif; color: #fff; }
.sg { flex: none; margin-right: 7px; }
.zh { font-size: 21px; font-weight: 700; color: #1f78c8; margin-right: 6px; width: 26px; }
.punct { font: 700 21px/1 "Liberation Serif", serif; color: #1f78c8; width: 26px; text-align: center; margin-right: 3px; }
```
